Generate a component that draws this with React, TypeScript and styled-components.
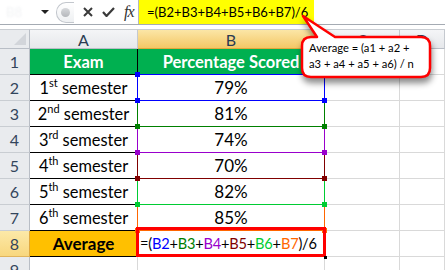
import { FC } from 'react';
import styled, { createGlobalStyle } from 'styled-components';

interface ScoreRow {
  num: number;
  ord: string;
  suffix: string;
  value: string;
  color: string;
}

const rows: ScoreRow[] = [
  { num: 2, ord: '1', suffix: 'st', value: '79%', color: '#0000FF' },
  { num: 3, ord: '2', suffix: 'nd', value: '81%', color: '#008000' },
  { num: 4, ord: '3', suffix: 'rd', value: '74%', color: '#9900CC' },
  { num: 5, ord: '4', suffix: 'th', value: '70%', color: '#800000' },
  { num: 6, ord: '5', suffix: 'th', value: '82%', color: '#00CC33' },
  { num: 7, ord: '6', suffix: 'th', value: '85%', color: '#FF6600' }
];

const GlobalStyle = createGlobalStyle`
  html, body {
    margin: 0;
    padding: 0;
    background: #FFFFFF;
  }
  body {
    font-family: 'Lato', 'Liberation Sans', sans-serif;
  }
`;

const App: FC = () => {
  return (
    <Page>
      <GlobalStyle />
      <FormulaBar>
        <NameBox>
          <NameText>B8</NameText>
          <svg width="8" height="4" viewBox="0 0 8 4">
            <path d="M0 0 L8 0 L4 4 Z" fill="#222" />
          </svg>
        </NameBox>
        <ButtonPanel>
          <Knob><KnobDot /></Knob>
          <svg width="10" height="10" viewBox="0 0 10 10">
            <path d="M1 1 L9 9 M9 1 L1 9" stroke="#3A3A3A" strokeWidth="2" />
          </svg>
          <svg width="13" height="10" viewBox="0 0 13 10">
            <path d="M1 5 L4.5 9 L12 1" stroke="#3A3A3A" strokeWidth="2.2" fill="none" />
          </svg>
          <FxLabel>fx</FxLabel>
        </ButtonPanel>
        <FormulaField>
          <FormulaHighlight>=(B2+B3+B4+B5+B6+B7)/6</FormulaHighlight>
        </FormulaField>
      </FormulaBar>
      <Gap />
      <Sheet>
        <Corner>
          <svg width="12" height="12" viewBox="0 0 12 12">
            <path d="M12 0 L12 12 L0 12 Z" fill="#D2D5DA" />
          </svg>
        </Corner>
        <ColHeader>A</ColHeader>
        <ColHeader $selected>B</ColHeader>
        <ColHeader>C</ColHeader>
        <ColHeader>D</ColHeader>

        <RowHeader>1</RowHeader>
        <TitleCell>Exam</TitleCell>
        <TitleCell>Percentage Scored</TitleCell>
        <GridCell />
        <GridCell />

        {rows.map((row, i) => (
          <RowGroup key={row.num}>
            <RowHeader>{row.num}</RowHeader>
            <ExamCell>
              <span>{row.ord}<Sup>{row.suffix}</Sup> semester</span>
            </ExamCell>
            <ValueCell>
              {row.value}
              <RangeBox $color={row.color} style={{ zIndex: 20 - i }}>
                <Handle $color={row.color} $v="top" $h="left" />
                <Handle $color={row.color} $v="top" $h="right" />
                <Handle $color={row.color} $v="bottom" $h="left" />
                <Handle $color={row.color} $v="bottom" $h="right" />
              </RangeBox>
            </ValueCell>
            <GridCell />
            <GridCell />
          </RowGroup>
        ))}

        <RowHeader $selected>8</RowHeader>
        <AverageCell>Average</AverageCell>
        <FormulaCell>
          <FormulaText>
            =(
            {rows.map((row, i) => (
              <span key={row.num}>
                {i > 0 && '+'}
                <Ref $color={row.color}>B{row.num}</Ref>
              </span>
            ))}
            )/6
          </FormulaText>
          <EditBox />
          <FillHandle />
        </FormulaCell>
        <GridCell />
        <GridCell />

        <RowHeader>9</RowHeader>
        <GridCell />
        <GridCell />
        <GridCell />
        <GridCell />
      </Sheet>

      <Callout>
        <CalloutShape width="145" height="80" viewBox="0 0 145 80">
          <path
            d="M15 27 L21 27 L7 6 L39 27 L125 27 Q134 27 134 36 L134 58 Q134 67 125 67 L15 67 Q6 67 6 58 L6 36 Q6 27 15 27 Z"
            fill="#FFFFFF"
            stroke="#FF0000"
            strokeWidth="2.5"
            strokeLinejoin="round"
          />
        </CalloutShape>
        <CalloutText>
          Average = (a1 + a2 +<br />a3 + a4 + a5 + a6) / n
        </CalloutText>
      </Callout>
    </Page>
  );
};

const Page = styled.div`
  position: relative;
  width: 445px;
  height: 270px;
  overflow: hidden;
  background: #FFFFFF;
`;

const FormulaBar = styled.div`
  display: flex;
  height: 25px;
  box-sizing: border-box;
  border-bottom: 1px solid #A5ABB3;
`;

const NameBox = styled.div`
  display: flex;
  align-items: center;
  justify-content: space-between;
  width: 56px;
  padding: 0 7px 0 6px;
  box-sizing: border-box;
`;

const NameText = styled.span`
  font-size: 13px;
  color: #F2F3F5;
  filter: blur(0.8px);
`;

const ButtonPanel = styled.div`
  display: flex;
  align-items: center;
  width: 83px;
  box-sizing: border-box;
  border-right: 1px solid #B4B8BE;

  & > svg:nth-of-type(1) {
    margin-left: 9px;
  }

  & > svg:nth-of-type(2) {
    margin-left: 9px;
  }
`;

const Knob = styled.div`
  display: flex;
  align-items: center;
  justify-content: center;
  width: 17px;
  height: 19px;
  border: 1px solid #C3C7CD;
  border-right: none;
  border-radius: 10px 0 0 10px;
  background: linear-gradient(#FFFFFF, #EEF0F2);
`;

const KnobDot = styled.div`
  width: 9px;
  height: 9px;
  border-radius: 50%;
  background: linear-gradient(#D6D8DB, #B5B8BC);
`;

const FxLabel = styled.span`
  margin-left: 9px;
  font-family: 'Liberation Serif', serif;
  font-style: italic;
  font-size: 16px;
  color: #333333;
  letter-spacing: -1px;
`;

const FormulaField = styled.div`
  display: flex;
  flex: 1;
`;

const FormulaHighlight = styled.div`
  display: flex;
  align-items: center;
  height: 24px;
  padding: 0 6px 0 8px;
  background: #FFFF00;
  font-size: 13px;
  color: #000000;
`;

const Gap = styled.div`
  height: 4px;
`;

const Sheet = styled.div`
  display: grid;
  grid-template-columns: 30px 108px 187px 75px 1fr;
  grid-template-rows: 20px repeat(9, 26px);
`;

const RowGroup = styled.div`
  display: contents;
`;

const Corner = styled.div`
  display: flex;
  align-items: flex-end;
  justify-content: flex-end;
  padding: 0 3px 3px 0;
  background: #E9EBEE;
  border-top: 1px solid #C9CDD2;
  border-right: 1px solid #B9BEC6;
  border-bottom: 1px solid #B9BEC6;
`;

const ColHeader = styled.div<{ $selected?: boolean }>`
  display: flex;
  align-items: center;
  justify-content: center;
  font-size: 16px;
  color: #2B3B52;
  background: ${p => (p.$selected
    ? 'linear-gradient(#FBE6A6, #F4C766)'
    : 'linear-gradient(#F4F5F7, #E6E8EB)')};
  border-top: 1px solid #C9CDD2;
  border-right: 1px solid ${p => (p.$selected ? '#E2B55A' : '#C5C9CF')};
  border-bottom: 1px solid ${p => (p.$selected ? '#E0A83C' : '#B9BEC6')};
`;

const RowHeader = styled.div<{ $selected?: boolean }>`
  display: flex;
  align-items: center;
  justify-content: center;
  font-size: 16px;
  color: #33455C;
  background: ${p => (p.$selected ? 'linear-gradient(#FCE9A8, #F8D77E)' : '#E9EBEE')};
  border-right: 1px solid ${p => (p.$selected ? '#E0A83C' : '#B9BEC6')};
  border-bottom: 1px solid ${p => (p.$selected ? '#E0B45C' : '#C9CDD2')};
`;

const BaseCell = styled.div`
  position: relative;
  display: flex;
  align-items: center;
  justify-content: center;
  box-sizing: border-box;
  font-size: 17px;
  color: #000000;
  white-space: nowrap;
`;

const TitleCell = styled(BaseCell)`
  background: #00B050;
  color: #FFFFFF;
  font-weight: 700;
  font-size: 16.5px;
  border-right: 1px solid #000000;
  border-bottom: 1px solid #000000;
`;

const ExamCell = styled(BaseCell)`
  font-size: 16.4px;
  border-right: 1px solid #000000;
  border-bottom: 1px solid #000000;
`;

const Sup = styled.sup`
  font-size: 11px;
  vertical-align: 7px;
  line-height: 0;
`;

const ValueCell = styled(BaseCell)`
  border-right: 1px solid #000000;
  border-bottom: 1px solid #000000;
`;

const RangeBox = styled.div<{ $color: string }>`
  position: absolute;
  top: -1px;
  left: -1px;
  right: -1px;
  bottom: -1px;
  border: 1px solid ${p => p.$color};
  pointer-events: none;
`;

const Handle = styled.div<{ $color: string; $v: 'top' | 'bottom'; $h: 'left' | 'right' }>`
  position: absolute;
  ${p => p.$v}: -3px;
  ${p => p.$h}: -3px;
  width: 5px;
  height: 5px;
  background: ${p => p.$color};
`;

const GridCell = styled(BaseCell)`
  border-right: 1px solid #D9D9D9;
  border-bottom: 1px solid #D9D9D9;
`;

const AverageCell = styled(BaseCell)`
  background: #FFC000;
  font-weight: 700;
  border-right: 1px solid #000000;
  border-bottom: 1px solid #000000;
`;

const FormulaCell = styled(BaseCell)`
  justify-content: flex-start;
  padding-left: 2px;
  border-right: 1px solid #D9D9D9;
  border-bottom: 1px solid #D9D9D9;
`;

const FormulaText = styled.span`
  font-size: 14.6px;
  letter-spacing: -0.2px;
`;

const Ref = styled.span<{ $color: string }>`
  color: ${p => p.$color};
`;

const EditBox = styled.div`
  position: absolute;
  top: -4px;
  left: -2px;
  right: -2px;
  bottom: -1px;
  border: 3px solid #FF0000;
  z-index: 30;
`;

const FillHandle = styled.div`
  position: absolute;
  right: -3px;
  bottom: -3px;
  width: 3px;
  height: 3px;
  background: #000000;
  z-index: 31;
`;

const Callout = styled.div`
  position: absolute;
  left: 296px;
  top: 10px;
  width: 145px;
  height: 80px;
  z-index: 40;
`;

const CalloutShape = styled.svg`
  position: absolute;
  left: 0;
  top: 0;
  filter: drop-shadow(1px 5px 3px rgba(0, 0, 0, 0.45));
`;

const CalloutText = styled.div`
  position: relative;
  padding: 30px 0 0 13px;
  font-size: 11.2px;
  line-height: 16px;
  color: #000000;
`;

export default App;
